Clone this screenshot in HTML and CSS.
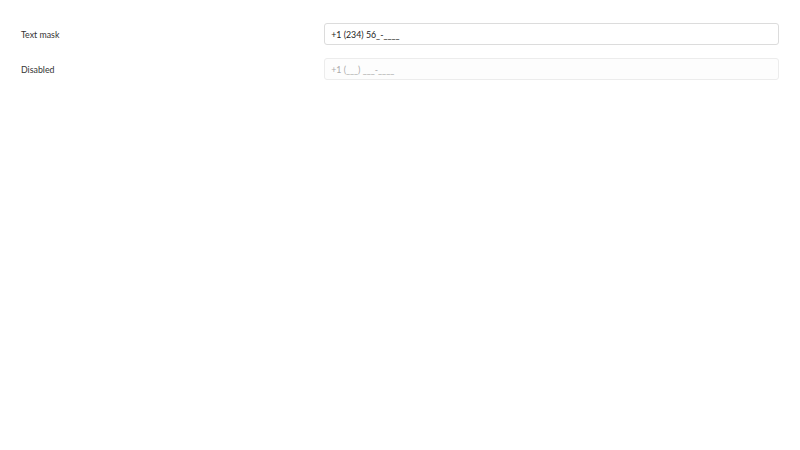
FILE: index.html
```html
<!DOCTYPE html>
<html>
<head>
<meta charset="utf-8">
<link rel="stylesheet" href="styles.css">
</head>
<body>
<div class="form">
  <div class="row">
    <label class="label">Text mask</label>
    <div class="field"><div class="input">+1 (234) 56_-____</div></div>
  </div>
  <div class="row">
    <label class="label">Disabled</label>
    <div class="field"><div class="input disabled">+1 (___) ___-____</div></div>
  </div>
</div>
</body>
</html>
```
FILE: styles.css
```css
html, body {
  margin: 0;
  background: #fff;
  font-family: Lato, "Open Sans", sans-serif;
  font-size: 8.8px;
  color: #333;
}
.form {
  padding: 23px 21px;
  display: flex;
  flex-direction: column;
  gap: 13px;
}
.row {
  display: grid;
  grid-template-columns: 40% 60%;
  align-items: center;
}
.label {
  color: #333;
}
.input {
  box-sizing: border-box;
  height: 22px;
  border: 1px solid #dcdcdc;
  border-radius: 3px;
  padding: 0 6px;
  display: flex;
  align-items: center;
  color: #222;
}
.input.disabled {
  color: #aaa;
  border-color: #ececec;
  background: #fdfdfd;
}
```
